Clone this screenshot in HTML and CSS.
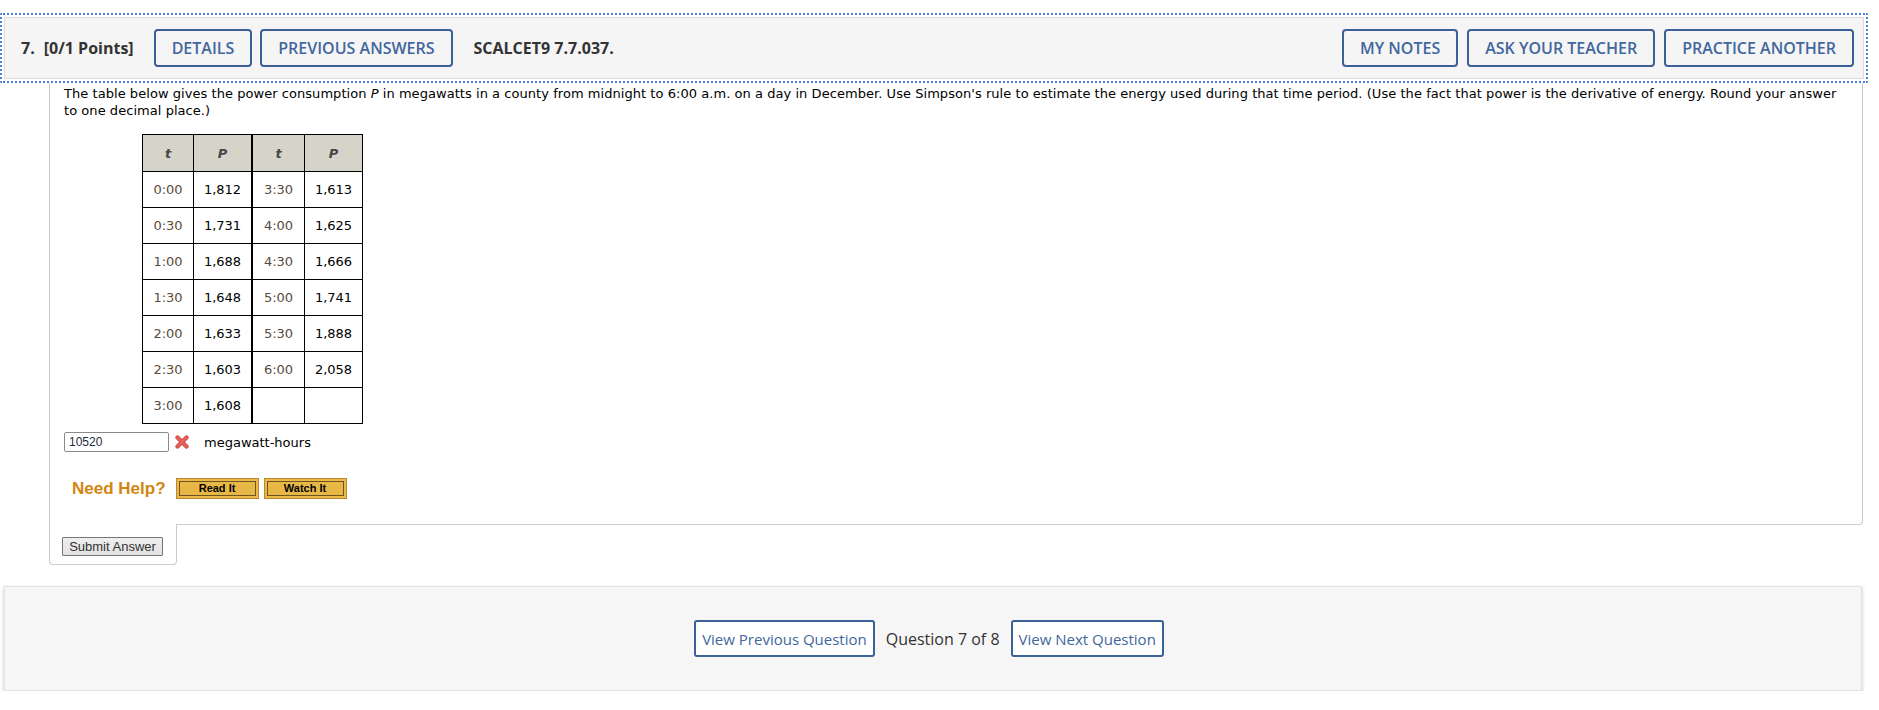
FILE: index.html
```html
<!DOCTYPE html>
<html>
<head>
<meta charset="utf-8">
<link rel="stylesheet" href="styles.css">
</head>
<body>
<div class="page">
  <div class="focus">
    <div class="qhead">
      <div class="qhead-left">
        <span class="qnum">7.</span><span class="qpts">[0/1 Points]</span>
        <button class="hbtn">DETAILS</button>
        <button class="hbtn">PREVIOUS ANSWERS</button>
        <span class="qref">SCALCET9 7.7.037.</span>
      </div>
      <div class="qhead-right">
        <button class="hbtn">MY NOTES</button>
        <button class="hbtn">ASK YOUR TEACHER</button>
        <button class="hbtn">PRACTICE ANOTHER</button>
      </div>
    </div>
  </div>
  <div class="qbody">
    <p class="prompt">The table below gives the power consumption <i>P</i> in megawatts in a county from midnight to 6:00 a.m. on a day in December. Use Simpson's rule to estimate the energy used during that time period. (Use the fact that power is the derivative of energy. Round your answer to one decimal place.)</p>
    <table class="data">
      <tr class="hrow"><th class="c1">t</th><th class="c2 mid">P</th><th class="c3">t</th><th class="c4">P</th></tr>
      <tr><td class="tm">0:00</td><td class="mid">1,812</td><td class="tm">3:30</td><td>1,613</td></tr>
      <tr><td class="tm">0:30</td><td class="mid">1,731</td><td class="tm">4:00</td><td>1,625</td></tr>
      <tr><td class="tm">1:00</td><td class="mid">1,688</td><td class="tm">4:30</td><td>1,666</td></tr>
      <tr><td class="tm">1:30</td><td class="mid">1,648</td><td class="tm">5:00</td><td>1,741</td></tr>
      <tr><td class="tm">2:00</td><td class="mid">1,633</td><td class="tm">5:30</td><td>1,888</td></tr>
      <tr><td class="tm">2:30</td><td class="mid">1,603</td><td class="tm">6:00</td><td>2,058</td></tr>
      <tr><td class="tm">3:00</td><td class="mid">1,608</td><td></td><td></td></tr>
    </table>
    <div class="answer">
      <input class="ans-input" type="text" value="10520">
      <svg class="xicon" width="14" height="14" viewBox="0 0 14 14">
        <path d="M2.5 2.5 L11.5 11.5 M11.5 2.5 L2.5 11.5" stroke="#c9403c" stroke-width="4.2" stroke-linecap="round"/>
        <path d="M2.5 2.5 L11.5 11.5 M11.5 2.5 L2.5 11.5" stroke="#e8625c" stroke-width="2.6" stroke-linecap="round"/>
      </svg>
      <span class="unit">megawatt-hours</span>
    </div>
    <div class="help">
      <span class="help-label">Need Help?</span>
      <button class="gold"><span class="gold-in">Read It</span></button>
      <button class="gold"><span class="gold-in">Watch It</span></button>
    </div>
  </div>
  <div class="submit-tab"><button class="submit">Submit Answer</button></div>
  <div class="footer">
    <button class="fbtn">View Previous Question</button>
    <span class="qcount">Question 7 of 8</span>
    <button class="fbtn">View Next Question</button>
  </div>
</div>
</body>
</html>
```
FILE: styles.css
```css
html, body {
  margin: 0;
  padding: 0;
  background: #ffffff;
}
.page {
  width: 1868px;
  padding-top: 13px;
  font-family: "DejaVu Sans", Verdana, sans-serif;
  color: #000;
}
button {
  font: inherit;
  margin: 0;
  cursor: pointer;
}
.focus {
  border: 2px dotted #4a7fdb;
  border-radius: 2px;
  padding: 2px;
}
.qhead {
  box-sizing: border-box;
  height: 62px;
  background: #f5f5f5;
  border: 1px solid #dcdcdc;
  display: flex;
  align-items: center;
  justify-content: space-between;
  padding: 0 9px 0 16px;
  font-family: "Open Sans", "Noto Sans", sans-serif;
}
.qhead-left, .qhead-right {
  display: flex;
  align-items: center;
}
.qnum, .qpts, .qref {
  font-weight: 700;
  font-size: 16px;
  color: #333;
}
.qnum { margin-right: 9px; }
.qpts { margin-right: 20px; }
.qref { margin-left: 21px; }
.hbtn {
  box-sizing: border-box;
  height: 38px;
  padding: 0 16px;
  border: 2px solid #3c6098;
  border-radius: 4px;
  background: #f5f5f5;
  color: #41679e;
  font-family: "Open Sans", "Noto Sans", sans-serif;
  font-weight: 600;
  font-size: 16px;
}
.hbtn + .hbtn { margin-left: 8px; }
.qhead-right .hbtn + .hbtn { margin-left: 9px; }

.qbody {
  margin-left: 49px;
  width: 1814px;
  box-sizing: border-box;
  border: 1px solid #cccccc;
  border-top: none;
  border-bottom-right-radius: 4px;
  padding: 2px 20px 25px 14px;
}
.prompt {
  margin: 0;
  font-size: 13px;
  line-height: 17px;
  letter-spacing: 0.05px;
}
.data {
  margin: 15px 0 0 78px;
  border-collapse: collapse;
  font-size: 13px;
}
.data th, .data td {
  border: 1px solid #000;
  text-align: center;
  padding: 0;
  height: 35px;
}
.data th {
  background: #d6d3c9;
  color: #464646;
  font-style: italic;
  font-weight: 700;
  height: 36px;
}
.data .c1 { width: 50px; }
.data .c2 { width: 57px; }
.data .c3 { width: 51px; }
.data .c4 { width: 57px; }
.data .mid { border-right-width: 2px; }
.data .tm { color: #5a4b3c; }

.answer {
  display: flex;
  align-items: center;
  margin-top: 8px;
}
.ans-input {
  box-sizing: border-box;
  width: 105px;
  height: 20px;
  border: 1px solid #8a8a8a;
  border-radius: 2px;
  padding: 0 4px;
  margin: 0;
  font-family: "Liberation Sans", Arial, sans-serif;
  font-size: 12px;
  color: #1c2a44;
}
.xicon {
  margin-left: 6px;
  display: block;
}
.unit {
  margin-left: 15px;
  font-size: 13px;
}
.help {
  display: flex;
  align-items: center;
  margin-top: 26px;
  padding-left: 8px;
}
.help-label {
  font-family: "Liberation Sans", Arial, sans-serif;
  font-weight: 700;
  font-size: 17px;
  color: #d4850f;
  margin-right: 10px;
}
.gold {
  box-sizing: border-box;
  width: 83px;
  height: 21px;
  padding: 2px;
  border: 1px solid #c0852e;
  background: #e9b949;
  display: flex;
}
.gold + .gold { margin-left: 5px; }
.gold-in {
  flex: 1;
  border: 1px solid #6e5322;
  background: #e8b847;
  font-family: "Liberation Sans", Arial, sans-serif;
  font-weight: 700;
  font-size: 11px;
  line-height: 13px;
  color: #000;
  text-align: center;
}
.submit-tab {
  margin-left: 49px;
  margin-top: -1px;
  width: 128px;
  box-sizing: border-box;
  background: #fff;
  border: 1px solid #cccccc;
  border-top: none;
  border-radius: 0 0 4px 4px;
  padding: 13px 0 8px 12px;
}
.submit {
  box-sizing: border-box;
  height: 19px;
  width: 101px;
  padding: 0;
  border: 1px solid #767676;
  border-radius: 1px;
  background: linear-gradient(#efefef, #e1e1e1);
  font-family: "Liberation Sans", Arial, sans-serif;
  font-size: 13px;
  color: #333;
  display: block;
}
.footer {
  margin: 21px 0 0 4px;
  width: 1858px;
  height: 105px;
  box-sizing: border-box;
  background: #f6f6f6;
  border: 1px solid #e2e2e2;
  box-shadow: 0 2px 4px rgba(0, 0, 0, 0.22);
  display: flex;
  align-items: center;
  justify-content: center;
  font-family: "Open Sans", "Noto Sans", sans-serif;
  padding-right: 8px;
}
.fbtn {
  box-sizing: border-box;
  height: 37px;
  padding: 0 6px;
  border: 2px solid #3c6098;
  border-radius: 3px;
  background: #fff;
  color: #41679e;
  font-family: "Open Sans", "Noto Sans", sans-serif;
  font-size: 15px;
}
.qcount {
  font-size: 16px;
  color: #333;
  margin: 0 11px;
}
```
